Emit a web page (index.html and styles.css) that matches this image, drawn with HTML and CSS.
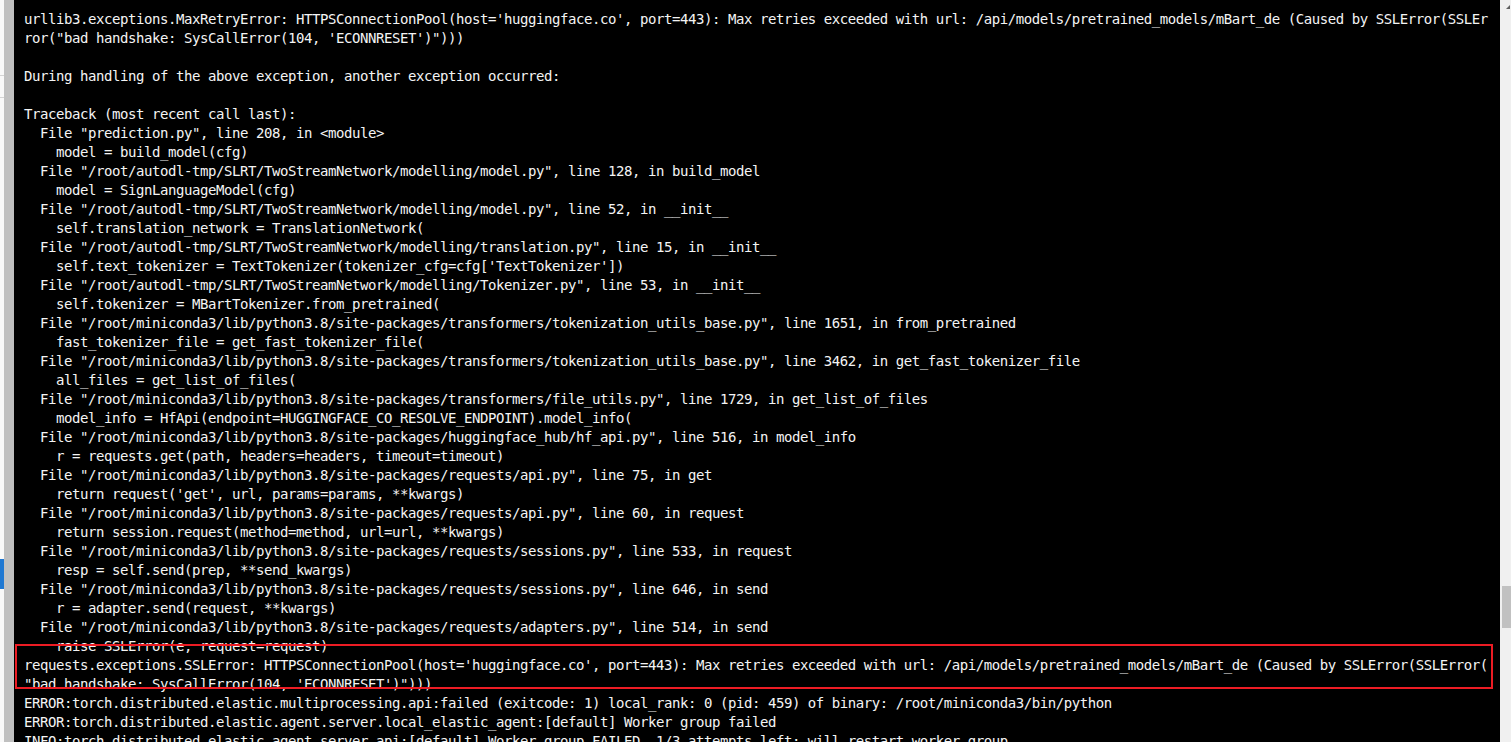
FILE: index.html
```html
<!DOCTYPE html>
<html>
<head>
<meta charset="utf-8">
<title>Terminal</title>
<link rel="stylesheet" href="styles.css">
</head>
<body>
<div class="window">
  <div class="gutter">
    <div class="gutter-edge">
      <div class="edge-line edge-line-1"></div>
      <div class="edge-line edge-line-2"></div>
      <div class="edge-tab"></div>
    </div>
    <div class="gutter-frame"></div>
  </div>
  <div class="terminal">
<pre class="output">urllib3.exceptions.MaxRetryError: HTTPSConnectionPool(host='huggingface.co', port=443): Max retries exceeded with url: /api/models/pretrained_models/mBart_de (Caused by SSLError(SSLEr
ror("bad handshake: SysCallError(104, 'ECONNRESET')")))

During handling of the above exception, another exception occurred:

Traceback (most recent call last):
  File "prediction.py", line 208, in &lt;module&gt;
    model = build_model(cfg)
  File "/root/autodl-tmp/SLRT/TwoStreamNetwork/modelling/model.py", line 128, in build_model
    model = SignLanguageModel(cfg)
  File "/root/autodl-tmp/SLRT/TwoStreamNetwork/modelling/model.py", line 52, in __init__
    self.translation_network = TranslationNetwork(
  File "/root/autodl-tmp/SLRT/TwoStreamNetwork/modelling/translation.py", line 15, in __init__
    self.text_tokenizer = TextTokenizer(tokenizer_cfg=cfg['TextTokenizer'])
  File "/root/autodl-tmp/SLRT/TwoStreamNetwork/modelling/Tokenizer.py", line 53, in __init__
    self.tokenizer = MBartTokenizer.from_pretrained(
  File "/root/miniconda3/lib/python3.8/site-packages/transformers/tokenization_utils_base.py", line 1651, in from_pretrained
    fast_tokenizer_file = get_fast_tokenizer_file(
  File "/root/miniconda3/lib/python3.8/site-packages/transformers/tokenization_utils_base.py", line 3462, in get_fast_tokenizer_file
    all_files = get_list_of_files(
  File "/root/miniconda3/lib/python3.8/site-packages/transformers/file_utils.py", line 1729, in get_list_of_files
    model_info = HfApi(endpoint=HUGGINGFACE_CO_RESOLVE_ENDPOINT).model_info(
  File "/root/miniconda3/lib/python3.8/site-packages/huggingface_hub/hf_api.py", line 516, in model_info
    r = requests.get(path, headers=headers, timeout=timeout)
  File "/root/miniconda3/lib/python3.8/site-packages/requests/api.py", line 75, in get
    return request('get', url, params=params, **kwargs)
  File "/root/miniconda3/lib/python3.8/site-packages/requests/api.py", line 60, in request
    return session.request(method=method, url=url, **kwargs)
  File "/root/miniconda3/lib/python3.8/site-packages/requests/sessions.py", line 533, in request
    resp = self.send(prep, **send_kwargs)
  File "/root/miniconda3/lib/python3.8/site-packages/requests/sessions.py", line 646, in send
    r = adapter.send(request, **kwargs)
  File "/root/miniconda3/lib/python3.8/site-packages/requests/adapters.py", line 514, in send
    raise SSLError(e, request=request)
requests.exceptions.SSLError: HTTPSConnectionPool(host='huggingface.co', port=443): Max retries exceeded with url: /api/models/pretrained_models/mBart_de (Caused by SSLError(SSLError(
"bad handshake: SysCallError(104, 'ECONNRESET')")))
ERROR:torch.distributed.elastic.multiprocessing.api:failed (exitcode: 1) local_rank: 0 (pid: 459) of binary: /root/miniconda3/bin/python
ERROR:torch.distributed.elastic.agent.server.local_elastic_agent:[default] Worker group failed
INFO:torch.distributed.elastic.agent.server.api:[default] Worker group FAILED. 1/3 attempts left; will restart worker group.</pre>
    <div class="highlight-box"></div>
  </div>
  <div class="scrollbar">
    <div class="scroll-arrow"></div>
    <div class="scroll-thumb"></div>
  </div>
</div>
</body>
</html>
```

FILE: styles.css
```css
html, body {
  margin: 0;
  padding: 0;
  height: 742px;
  overflow: hidden;
  background: #000;
}

.window {
  display: flex;
  flex-direction: row;
  width: 1511px;
  height: 742px;
  overflow: hidden;
}

.gutter {
  display: flex;
  flex-direction: row;
  flex: 0 0 14px;
  height: 100%;
}

.gutter-edge {
  width: 4px;
  height: 100%;
  background: #f9f9f9;
  display: flex;
  flex-direction: column;
}

.edge-line {
  height: 1px;
  background: #d4d4d4;
}

.edge-line-1 {
  margin-top: 75px;
}

.edge-line-2 {
  margin-top: 21px;
}

.edge-tab {
  margin-top: 461px;
  height: 30px;
  background: #1f78d2;
}

.gutter-frame {
  width: 10px;
  height: 100%;
  background: #c0c0c0;
}

.terminal {
  position: relative;
  flex: 1 1 auto;
  height: 100%;
  background: #000;
  overflow: hidden;
}

.output {
  margin: 0;
  padding: 10px 0 0 10px;
  color: #f4f4f4;
  font-family: "DejaVu Sans Mono", "Liberation Mono", monospace;
  font-size: 14px;
  letter-spacing: -0.43px;
  line-height: 19px;
  white-space: pre;
}

.highlight-box {
  position: absolute;
  left: 1px;
  top: 644px;
  width: 1474px;
  height: 41px;
  border: 2px solid #ec1c24;
}

.scrollbar {
  flex: 0 0 11px;
  height: 100%;
  background: #f0f0f0;
  display: flex;
  flex-direction: column;
  align-items: flex-end;
}

.scroll-arrow {
  margin-top: 5px;
  margin-right: 1px;
  width: 0;
  height: 0;
  border-left: 4px solid transparent;
  border-bottom: 4px solid #606060;
}

.scroll-thumb {
  margin-top: 577px;
  width: 9px;
  height: 42px;
  background: #c1c1c1;
}
```
